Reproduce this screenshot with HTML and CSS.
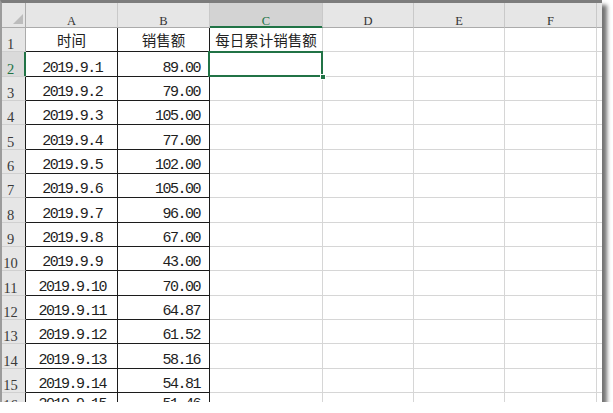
FILE: index.html
```html
<!DOCTYPE html>
<html>

<head>
  <meta charset="utf-8">
  <link rel="stylesheet" href="styles.css">
</head>

<body>

  <!-- Excel sheet: corner + columns A..G, rows 1..16 -->
  <div class="frame">
    <div class="sheet">
      <div class="corner"><span class="tri"></span></div>
      <div class="col">A</div>
      <div class="col">B</div>
      <div class="col sel">C</div>
      <div class="col">D</div>
      <div class="col">E</div>
      <div class="col">F</div>
      <div class="col"></div>

      <div class="row-no">1</div>
      <div class="tb title">时间</div>
      <div class="tb title">销售额</div>
      <div class="title">每日累计销售额</div>
      <div></div><div></div><div></div><div></div>

      <div class="row-no sel">2</div>
      <div class="tb date">2019.9.1</div>
      <div class="tb num">89.00</div>
      <div class="active"></div>
      <div></div><div></div><div></div><div></div>

      <div class="row-no edge">3</div>
      <div class="tb date">2019.9.2</div>
      <div class="tb num">79.00</div>
      <div></div><div></div><div></div><div></div><div></div>

      <div class="row-no edge">4</div>
      <div class="tb date">2019.9.3</div>
      <div class="tb num">105.00</div>
      <div></div><div></div><div></div><div></div><div></div>

      <div class="row-no edge">5</div>
      <div class="tb date">2019.9.4</div>
      <div class="tb num">77.00</div>
      <div></div><div></div><div></div><div></div><div></div>

      <div class="row-no edge">6</div>
      <div class="tb date">2019.9.5</div>
      <div class="tb num">102.00</div>
      <div></div><div></div><div></div><div></div><div></div>

      <div class="row-no edge">7</div>
      <div class="tb date">2019.9.6</div>
      <div class="tb num">105.00</div>
      <div></div><div></div><div></div><div></div><div></div>

      <div class="row-no edge">8</div>
      <div class="tb date">2019.9.7</div>
      <div class="tb num">96.00</div>
      <div></div><div></div><div></div><div></div><div></div>

      <div class="row-no edge">9</div>
      <div class="tb date">2019.9.8</div>
      <div class="tb num">67.00</div>
      <div></div><div></div><div></div><div></div><div></div>

      <div class="row-no edge">10</div>
      <div class="tb date">2019.9.9</div>
      <div class="tb num">43.00</div>
      <div></div><div></div><div></div><div></div><div></div>

      <div class="row-no edge">11</div>
      <div class="tb date">2019.9.10</div>
      <div class="tb num">70.00</div>
      <div></div><div></div><div></div><div></div><div></div>

      <div class="row-no edge">12</div>
      <div class="tb date">2019.9.11</div>
      <div class="tb num">64.87</div>
      <div></div><div></div><div></div><div></div><div></div>

      <div class="row-no edge">13</div>
      <div class="tb date">2019.9.12</div>
      <div class="tb num">61.52</div>
      <div></div><div></div><div></div><div></div><div></div>

      <div class="row-no edge">14</div>
      <div class="tb date">2019.9.13</div>
      <div class="tb num">58.16</div>
      <div></div><div></div><div></div><div></div><div></div>

      <div class="row-no edge">15</div>
      <div class="tb date">2019.9.14</div>
      <div class="tb num">54.81</div>
      <div></div><div></div><div></div><div></div><div></div>

      <div class="row-no edge">16</div>
      <div class="tb date">2019.9.15</div>
      <div class="tb num">51.46</div>
      <div></div><div></div><div></div><div></div><div></div>
    </div>
  </div>

</body>

</html>
```

FILE: styles.css
```css
body {
  margin: 0;
  background: #ffffff;
}

.frame {
  width: 600px;
  height: 399px;
  border-top: 3px solid #7d7d7d;
  border-left: 2px solid #9c9c9c;
  overflow: hidden;
  box-shadow: 5px 5px 4px rgba(0, 0, 0, 0.55);
}

.sheet {
  display: grid;
  grid-template-columns: 24px 92px 92px 113px 91px 91px 92px 60px;
  grid-template-rows: 25px 24px 25px 24px 24px 25px 24px 24px 25px 24px 24px 25px 24px 24px 25px 24px 20px;
}

.sheet > * {
  box-sizing: border-box;
  border-right: 1px solid #d6d6d6;
  border-bottom: 1px solid #d6d6d6;
  display: flex;
  align-items: flex-end;
  justify-content: center;
  white-space: nowrap;
}

.corner {
  background: #e6e6e6;
  border-right-color: #ababab;
  border-bottom-color: #ababab;
  justify-content: flex-end;
}

.tri {
  width: 0;
  height: 0;
  border-left: 10px solid transparent;
  border-bottom: 10px solid #bcbcbc;
  margin: 0 2px 3px 0;
}

.col {
  background: #e6e6e6;
  border-right-color: #c9c9c9;
  border-bottom-color: #ababab;
  font: 12.5px/12px "Liberation Serif", serif;
  color: #333333;
}

.col.sel {
  background: #d3d3d3;
  color: #217346;
  border-bottom-color: #217346;
  box-shadow: inset 0 -1px 0 #217346;
}

.row-no {
  background: #e6e6e6;
  border-right-color: #ababab;
  border-bottom-color: #d0d0d0;
  font: 14.5px/14.5px "Liberation Serif", serif;
  color: #3a3a3a;
  padding-right: 6px;
}

.row-no.sel {
  background: #dadada;
  color: #217346;
  border-right-color: #217346;
  box-shadow: inset -1px 0 0 #217346;
}

.row-no.edge {
  border-right-color: #1c1c1c;
}

.tb {
  border-right-color: #1c1c1c;
  border-bottom-color: #1c1c1c;
}

.title {
  font: 14.5px/14.5px "Noto Sans CJK SC", sans-serif;
  color: #222222;
  padding-bottom: 4px;
}

.date,
.num {
  font: 15px/14px "Liberation Mono", monospace;
  letter-spacing: -1.5px;
  color: #1e1e1e;
}

.date {
  padding-left: 1.5px;
}

.num {
  justify-content: flex-end;
  padding-right: 9px;
}

/* selected cell C2 with its fill handle */
.active {
  position: relative;
}

.active::before {
  content: "";
  position: absolute;
  top: -1px;
  left: -2px;
  right: -1px;
  bottom: -1px;
  border: 2px solid #217346;
}

.active::after {
  content: "";
  position: absolute;
  right: -4px;
  bottom: -4px;
  width: 4px;
  height: 4px;
  background: #217346;
  border: 1px solid #ffffff;
}
```
